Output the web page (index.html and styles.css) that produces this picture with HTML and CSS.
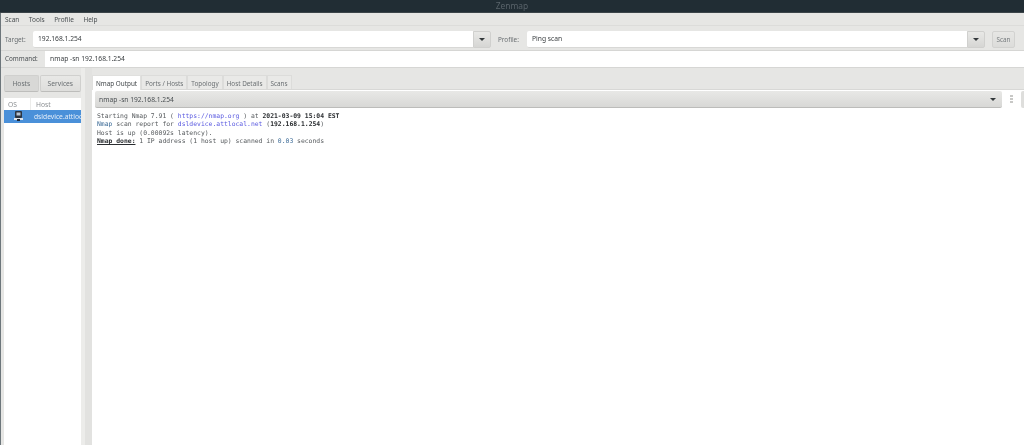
FILE: index.html
```html
<!DOCTYPE html>
<html lang="en">
<head>
<meta charset="utf-8">
<title>Zenmap</title>
<link rel="stylesheet" href="styles.css">
</head>
<body>
<div class="titlebar">Zenmap</div>
<div class="window">
  <nav class="menubar"><span>Scan</span><span>Tools</span><span>Profile</span><span>Help</span></nav>
  <div class="toolbar">
    <div class="row row-target">
      <label class="lbl lbl-target">Target:</label>
      <div class="combo"><div class="entry">192.168.1.254</div><div class="arrow"><i></i></div></div>
      <label class="lbl lbl-profile">Profile:</label>
      <div class="combo"><div class="entry">Ping scan</div><div class="arrow"><i></i></div></div>
      <div class="btn-scan">Scan</div>
    </div>
    <div class="row-command">
      <label class="lbl lbl-command">Command:</label>
      <div class="entry entry-command">nmap -sn 192.168.1.254</div>
    </div>
  </div>
  <div class="main">
    <aside class="side">
      <div class="switch"><div class="sw sw-on">Hosts</div><div class="sw">Services</div></div>
      <div class="list">
        <div class="list-head"><div class="col-os">OS</div><div class="col-host">Host</div></div>
        <div class="list-row">
          <div class="col-icon">
            <svg width="9" height="10" viewBox="0 0 9 10"><rect x="1" y="0" width="7" height="7" rx="1" fill="#2b3440"/><rect x="2.5" y="1.5" width="4" height="3" fill="#b9c4d2"/><rect x="0" y="7" width="9" height="2" fill="#dfe4ea"/><rect x="3" y="8" width="3" height="2" fill="#1e2630"/></svg>
          </div>
          <div class="row-host">dsldevice.attlocal.net</div>
        </div>
      </div>
    </aside>
    <div class="divider"></div>
    <section class="content">
      <div class="tabs">
        <div class="tab tab-on">Nmap Output</div>
        <div class="tab">Ports / Hosts</div>
        <div class="tab">Topology</div>
        <div class="tab">Host Details</div>
        <div class="tab">Scans</div>
      </div>
      <div class="page">
        <div class="output-bar">
          <div class="output-select"><span>nmap -sn 192.168.1.254</span><i></i></div>
          <div class="dots"><b></b><b></b><b></b></div>
          <div class="edge"></div>
        </div>
        <pre class="output">Starting Nmap 7.91 ( <a>https://nmap.org</a> ) at <b>2021-03-09 15:04 EST</b>
<span class="tint">Nmap</span> scan report for <a>dsldevice.attlocal.net</a> (<b>192.168.1.254</b>)
Host is up (0.00092s latency).
<b class="u">Nmap done:</b> 1 IP address (1 host up) scanned in <span class="tint">0.03</span> seconds</pre>
      </div>
    </section>
  </div>
</div>
</body>
</html>
```
FILE: styles.css
```css
* { box-sizing: border-box; }
html, body { margin: 0; height: 100%; overflow: hidden; }
body {
  width: 1024px; height: 445px;
  display: flex; flex-direction: column;
  background: #e6e6e4;
  font-family: "Noto Sans", "Open Sans", sans-serif;
  font-size: 6.7px;
  color: #4a4f52;
  filter: blur(0.3px);
}
.titlebar {
  height: 13px; flex: none;
  background: #212d34;
  border-bottom: 1px solid #3b4449;
  color: #59636a;
  font-size: 8.4px;
  line-height: 12px;
  text-align: center;
}
.window {
  flex: 1; min-height: 0;
  display: flex; flex-direction: column;
  border-left: 1px solid #6d767b;
}
.menubar {
  height: 13px; flex: none;
  display: flex; gap: 9.5px;
  padding-left: 4px;
  font-size: 6.5px;
  line-height: 13px;
  border-bottom: 1px solid #dcdcda;
}
.toolbar { flex: none; display: flex; flex-direction: column; }
.row { display: flex; align-items: center; }
.row-target { height: 25px; padding: 5px 0 3px 0; border-bottom: 1px solid #d6d6d4; }
.lbl { color: #6a6f72; flex: none; font-size: 6.35px; }
.lbl-target { width: 32px; padding-left: 4px; }
.lbl-profile { width: 36px; padding-left: 7px; }
.lbl-command { width: 44px; padding-left: 4px; color: #4a4f52; }
.combo { width: 458px; height: 17px; display: flex; flex: none; }
.entry {
  flex: 1; background: #fff; color: #3c4043;
  line-height: 15px;
  padding-left: 5px;
  border-radius: 2px 0 0 2px;
  border-bottom: 1px solid #d8d8d6;
}
.arrow {
  width: 18px; flex: none;
  background: linear-gradient(#e8e8e6, #d6d6d4);
  border: 1px solid #d0d0ce;
  border-radius: 0 2px 2px 0;
  display: flex; align-items: center; justify-content: center;
}
.arrow i, .output-select i {
  display: block; width: 0; height: 0;
  border-left: 3px solid transparent;
  border-right: 3px solid transparent;
  border-top: 3px solid #33383b;
}
.btn-scan {
  width: 23px; height: 17px; margin-left: 7px; flex: none;
  background: linear-gradient(#e6e6e4, #dcdcda);
  border: 1px solid #d2d2d0;
  border-radius: 2px;
  text-align: center; line-height: 15px;
  font-size: 6.35px;
  color: #777c7f;
}
.row-command { display: flex; height: 17px; align-items: stretch; border-bottom: 1px solid #d6d6d4; line-height: 16px; }
.entry-command { border-radius: 0; border-bottom: 0; padding-left: 5px; line-height: 16px; }
.main { flex: 1; min-height: 0; display: flex; }
.side { width: 80px; flex: none; display: flex; flex-direction: column; padding-top: 7px; padding-left: 3px; }
.switch { display: flex; height: 17px; flex: none; gap: 1px; }
.sw {
  flex: 34 0 0;
  text-align: center; line-height: 16px;
  color: #6a6f72;
  background: linear-gradient(#e8e8e6, #dededc);
  border: 1px solid #d0d0ce;
  border-bottom-color: #bdbdbb;
  border-radius: 2px;
}
.sw:last-child { flex: 41 0 0; }
.sw-on { background: #d8d8d6; }
.list { flex: 1; margin-top: 6px; margin-right: -1px; background: #fff; display: flex; flex-direction: column; }
.list-head { display: flex; height: 12px; flex: none; color: #8a8e91; line-height: 13px; }
.col-os { width: 27px; padding-left: 4px; border-right: 1px solid #ececea; }
.col-host { padding-left: 5px; }
.list-row { display: flex; height: 13px; flex: none; background: #4a90d9; color: #e4edf8; line-height: 13px; overflow: hidden; }
.col-icon { width: 27px; flex: none; display: flex; justify-content: center; padding-top: 1px; padding-left: 1px; }
.row-host { padding-left: 3px; white-space: nowrap; }
.divider { width: 11px; flex: none; background: #e2e2e0; border-left: 4px solid #ececea; border-right: 0; }
.content { flex: 1; min-width: 0; display: flex; flex-direction: column; padding-top: 7px; }
.tabs { display: flex; height: 14px; flex: none; }
.tab {
  padding: 0 3px;
  font-size: 6.35px;
  line-height: 15px;
  color: #6a6f72;
  background: #e9e9e7;
  border: 1px solid #dcdcda;
  border-bottom: 0;
}
.tab-on { background: #fff; color: #3f4447; height: 15px; border-color: #e0e0de; position: relative; z-index: 1; }
.page { flex: 1; background: #fff; min-height: 0; display: flex; flex-direction: column; border-top: 1px solid #d8d8d6; }
.output-bar { display: flex; height: 19px; flex: none; padding: 1px 0 1px 3px; }
.output-select {
  width: 907px; height: 17px; flex: none;
  display: flex; align-items: center; justify-content: space-between;
  padding: 0 6px 0 4px;
  background: linear-gradient(#e8e8e6, #d8d8d6);
  border-bottom: 1px solid #bcbcba;
  border-radius: 2px;
  color: #4a4f52;
}
.dots { width: 19px; display: flex; flex-direction: column; align-items: center; gap: 1px; padding-top: 4px; flex: none; }
.dots b { width: 3px; height: 2px; background: #c8c8c6; display: block; }
.edge { flex: 1; background: #dededc; border-radius: 2px 0 0 2px; }
.output {
  margin: 3px 0 0; padding: 0 0 0 5px;
  font-family: "DejaVu Sans Mono", monospace;
  font-size: 6.4px; line-height: 8.35px;
  color: #55595c;
}
.output a { color: #5a5ae0; }
.output b { color: #2a2d30; }
.output .u { text-decoration: underline; }
.tint { color: #3b6a96; }
```
